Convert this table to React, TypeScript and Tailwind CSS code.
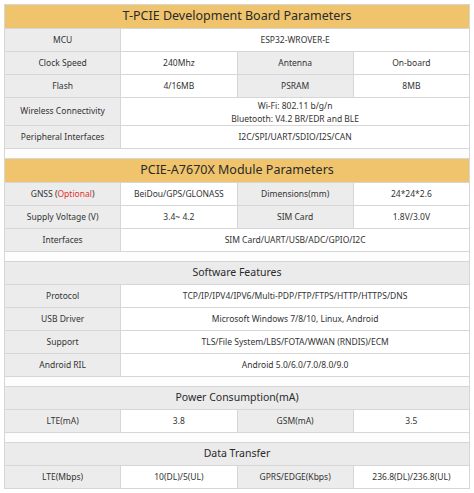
type Row =
  | { kind: 'head'; title: string; tone: 'gold' | 'grey' }
  | { kind: 'pair'; label: React.ReactNode; value: React.ReactNode; h?: string }
  | { kind: 'quad'; cells: [string, string, string, string] }
  | { kind: 'gap' };

import React from 'react';

const rows: Row[] = [
  { kind: 'head', title: 'T-PCIE Development Board Parameters', tone: 'gold' },
  { kind: 'pair', label: 'MCU', value: 'ESP32-WROVER-E' },
  { kind: 'quad', cells: ['Clock Speed', '240Mhz', 'Antenna', 'On-board'] },
  { kind: 'quad', cells: ['Flash', '4/16MB', 'PSRAM', '8MB'] },
  {
    kind: 'pair',
    label: 'Wireless Connectivity',
    value: (
      <span className="leading-[13px]">
        Wi-Fi: 802.11 b/g/n
        <br />
        Bluetooth: V4.2 BR/EDR and BLE
      </span>
    ),
    h: 'h-[28px]',
  },
  { kind: 'pair', label: 'Peripheral Interfaces', value: 'I2C/SPI/UART/SDIO/I2S/CAN' },
  { kind: 'gap' },
  { kind: 'head', title: 'PCIE-A7670X Module Parameters', tone: 'gold' },
  { kind: 'quad', cells: ['GNSS (Optional)', 'BeiDou/GPS/GLONASS', 'Dimensions(mm)', '24*24*2.6'] },
  { kind: 'quad', cells: ['Supply Voltage (V)', '3.4~ 4.2', 'SIM Card', '1.8V/3.0V'] },
  { kind: 'pair', label: 'Interfaces', value: 'SIM Card/UART/USB/ADC/GPIO/I2C' },
  { kind: 'gap' },
  { kind: 'head', title: 'Software Features', tone: 'grey' },
  { kind: 'pair', label: 'Protocol', value: 'TCP/IP/IPV4/IPV6/Multi-PDP/FTP/FTPS/HTTP/HTTPS/DNS' },
  { kind: 'pair', label: 'USB Driver', value: 'Microsoft Windows 7/8/10, Linux, Android' },
  { kind: 'pair', label: 'Support', value: 'TLS/File System/LBS/FOTA/WWAN (RNDIS)/ECM' },
  { kind: 'pair', label: 'Android RIL', value: 'Android 5.0/6.0/7.0/8.0/9.0' },
  { kind: 'gap' },
  { kind: 'head', title: 'Power Consumption(mA)', tone: 'grey' },
  { kind: 'quad', cells: ['LTE(mA)', '3.8', 'GSM(mA)', '3.5'] },
  { kind: 'gap' },
  { kind: 'head', title: 'Data Transfer', tone: 'grey' },
  { kind: 'quad', cells: ['LTE(Mbps)', '10(DL)/5(UL)', 'GPRS/EDGE(Kbps)', '236.8(DL)/236.8(UL)'] },
];

const cell = 'flex items-center justify-center border-r border-b border-[#d6d6d6] text-center';

function label(text: string) {
  if (text === 'GNSS (Optional)') {
    return (
      <>
        GNSS (<span className="text-[#e0302c]">Optional</span>)
      </>
    );
  }
  return text;
}

export default function App() {
  return (
    <div className="bg-white w-[474px] h-[493px] pt-[4px] pl-[4px]" style={{ fontFamily: '"Noto Sans", sans-serif' }}>
      <div className="w-[466px] border-l border-t border-[#d6d6d6] text-[8.5px] text-[#333]">
        {rows.map((r, i) => {
          if (r.kind === 'head') {
            return r.tone === 'gold' ? (
              <div key={i} className={`${cell} h-[24px] bg-[#f0c46c] text-[12.5px] text-[#2a2a2a]`}>
                {r.title}
              </div>
            ) : (
              <div key={i} className={`${cell} h-[23px] bg-[#ebebeb] text-[10.5px] text-[#2a2a2a]`}>
                {r.title}
              </div>
            );
          }
          if (r.kind === 'gap') {
            return <div key={i} className="h-[10px] border-r border-b border-[#d6d6d6] bg-[#fdfdfd]" />;
          }
          if (r.kind === 'pair') {
            return (
              <div key={i} className={`grid grid-cols-4 ${r.h ?? 'h-[23px]'}`}>
                <div className={`${cell} bg-[#ececec]`}>{r.label}</div>
                <div className={`${cell} col-span-3 bg-white`}>{r.value}</div>
              </div>
            );
          }
          return (
            <div key={i} className="grid grid-cols-4 h-[23px]">
              <div className={`${cell} bg-[#ececec]`}>{label(r.cells[0])}</div>
              <div className={`${cell} bg-white`}>{r.cells[1]}</div>
              <div className={`${cell} bg-[#ececec]`}>{r.cells[2]}</div>
              <div className={`${cell} bg-white`}>{r.cells[3]}</div>
            </div>
          );
        })}
      </div>
    </div>
  );
}
